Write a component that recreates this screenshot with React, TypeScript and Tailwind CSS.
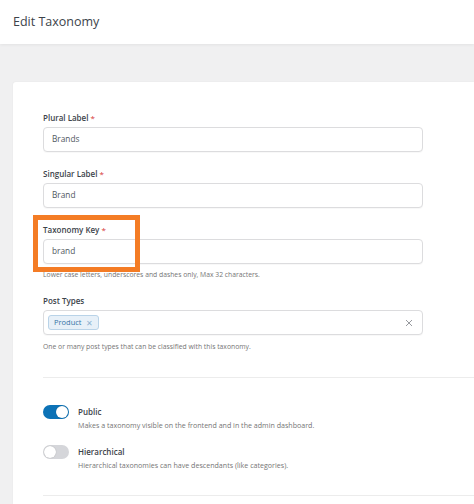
import React from "react";

function Field({
  label,
  value,
  required,
  help,
  highlight,
}: {
  label: string;
  value: string;
  required?: boolean;
  help?: string;
  highlight?: boolean;
}) {
  return (
    <div className="relative">
      {highlight && (
        <div className="absolute left-[-10px] top-[-8px] w-[107px] h-[57px] border-[5px] border-[#f47c25] z-10 pointer-events-none" />
      )}
      <div className="h-[14px] leading-[14px] text-[8px] font-semibold text-[#3c434a] mb-[2px]">
        {label}
        {required && <span className="text-[#d63638] font-normal"> *</span>}
      </div>
      <div className="h-[25px] w-[380px] rounded-[4px] border border-[#dcdcde] bg-white flex items-center px-[8px] text-[8.3px] text-[#50575e] shadow-[0_1px_1px_rgba(0,0,0,0.03)]">
        {value}
      </div>
      {help && (
        <div className="mt-[5px] h-[12px] leading-[12px] text-[6.8px] text-[#757575]">{help}</div>
      )}
    </div>
  );
}

function Toggle({ on }: { on: boolean }) {
  return (
    <div
      className={
        on
          ? "w-[26px] h-[14px] rounded-full bg-[#0c72b6] flex items-center justify-end px-[1.5px] shrink-0"
          : "w-[26px] h-[14px] rounded-full bg-[#d5d6da] flex items-center justify-start px-[1px] shrink-0"
      }
    >
      <div className="w-[11.5px] h-[11.5px] rounded-full bg-white shadow-[0_0_1px_rgba(0,0,0,0.3)]" />
    </div>
  );
}

export default function App() {
  return (
    <div
      className="w-[474px] h-[504px] overflow-hidden bg-[#f0f0f1] flex flex-col"
      style={{ fontFamily: '"Open Sans", "Noto Sans", sans-serif' }}
    >
      <div className="h-[44px] shrink-0 bg-white flex items-center px-[13px] shadow-[0_1px_3px_rgba(0,0,0,0.06)] relative z-10">
        <span className="text-[12.5px] text-[#3c434a] leading-none mt-[1px]">Edit Taxonomy</span>
      </div>
      <div className="flex-1 pt-[38px] pl-[13px]">
        <div className="bg-white h-full rounded-tl-[3px] shadow-[0_0_2px_rgba(0,0,0,0.06)] pl-[30px] pt-[29px]">
          <div className="flex flex-col gap-[15px]">
            <Field label="Plural Label" required value="Brands" />
            <Field label="Singular Label" required value="Brand" />
            <Field
              label="Taxonomy Key"
              required
              value="brand"
              highlight
              help="Lower case letters, underscores and dashes only, Max 32 characters."
            />
          </div>
          <div className="mt-[13px]">
            <div className="h-[14px] leading-[14px] text-[8px] font-semibold text-[#3c434a] mb-[2px]">
              Post Types
            </div>
            <div className="h-[25px] w-[380px] rounded-[4px] border border-[#dcdcde] bg-white flex items-center pl-[4px] pr-[9px] shadow-[0_1px_1px_rgba(0,0,0,0.03)]">
              <div className="h-[15px] rounded-[3px] border border-[#b9d3e8] bg-[#e7f0f8] flex items-center px-[5px] gap-[4px] text-[7.5px] text-[#3573a6]">
                <span>Product</span>
                <span className="text-[8px] text-[#8fb3d2] leading-none">✕</span>
              </div>
              <div className="flex-1" />
              <svg width="8" height="8" viewBox="0 0 8 8" className="shrink-0">
                <path d="M1 1L7 7M7 1L1 7" stroke="#8c8f94" strokeWidth="0.9" />
              </svg>
            </div>
            <div className="mt-[6px] h-[12px] leading-[12px] text-[6.8px] text-[#757575]">
              One or many post types that can be classified with this taxonomy.
            </div>
          </div>
          <div className="mt-[24px] border-t border-[#ececec]" />
          <div className="pt-[27px] flex flex-col gap-[14px]">
            <div className="flex gap-[9px]">
              <Toggle on />
              <div>
                <div className="h-[14px] leading-[14px] text-[8px] font-semibold text-[#3c434a]">Public</div>
                <div className="h-[12px] leading-[12px] text-[7.1px] text-[#757575]">
                  Makes a taxonomy visible on the frontend and in the admin dashboard.
                </div>
              </div>
            </div>
            <div className="flex gap-[9px]">
              <Toggle on={false} />
              <div>
                <div className="h-[14px] leading-[14px] text-[8px] font-semibold text-[#3c434a]">Hierarchical</div>
                <div className="h-[12px] leading-[12px] text-[7.1px] text-[#757575]">
                  Hierarchical taxonomies can have descendants (like categories).
                </div>
              </div>
            </div>
          </div>
          <div className="mt-[24px] border-t border-[#ececec]" />
        </div>
      </div>
    </div>
  );
}
